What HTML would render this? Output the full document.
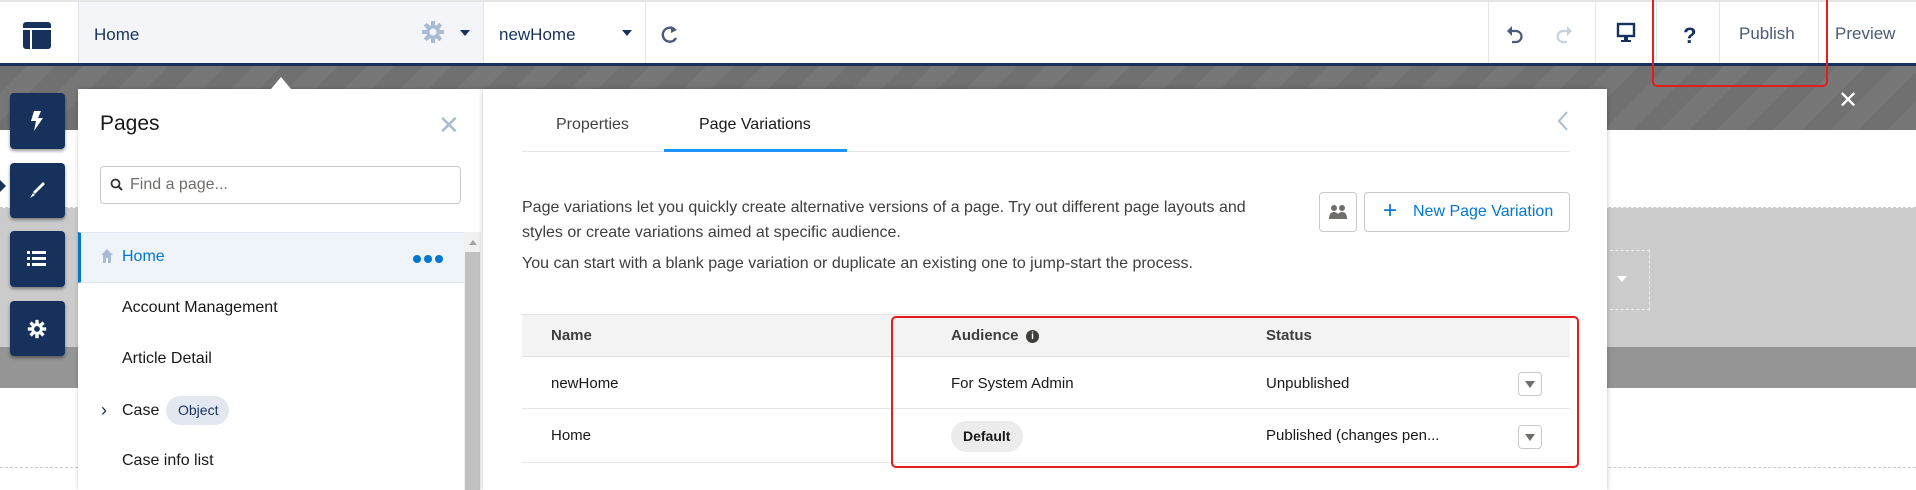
<!DOCTYPE html>
<html><head><meta charset="utf-8"><style>
*{box-sizing:border-box;margin:0;padding:0}
body{width:1916px;height:490px;overflow:hidden;position:relative;font-family:"Liberation Sans",sans-serif;background:#fff;color:#181818}
.a{position:absolute}
.t{position:absolute;white-space:nowrap}
.btn{background:#16325c;border-radius:4px;box-shadow:0 2px 3px rgba(0,0,0,.4)}
.row{position:absolute;left:122px;font-size:16px;color:#181818}
</style></head><body>
<div class="a" style="left:0;top:65px;width:1916px;height:65px;background:repeating-linear-gradient(135deg,#707070 0 20px,#777 20px 40px)"></div>
<div class="a" style="left:0;top:130px;width:1916px;height:78px;background:#fff;border-bottom:1px dashed #ccc"></div>
<div class="a" style="left:0;top:208px;width:1916px;height:139px;background:#cbcbcb"></div>
<div class="a" style="left:1610px;top:250px;width:40px;height:60px;border:1px dashed #eee;border-left:none"></div>
<div class="a" style="left:1617px;top:276px;border:5px solid transparent;border-top:6px solid #fff"></div>
<div class="a" style="left:0;top:347px;width:1916px;height:41px;background:#959595"></div>
<div class="a" style="left:0;top:467px;width:1916px;border-top:1px dashed #ccc"></div>
<div class="t" style="left:1838px;top:86px;color:#fff;font-size:24px">✕</div>

<div class="a" style="left:0;top:0;width:1916px;height:66px;background:#fff;border-top:2px solid #e5e5e5;border-bottom:3px solid #16325c"></div>
<div class="a" style="left:23px;top:22px;width:28px;height:27px;background:#16325c;border-radius:3px"></div>
<div class="a" style="left:23px;top:28px;width:28px;height:2px;background:#fff"></div>
<div class="a" style="left:30px;top:30px;width:2px;height:19px;background:#fff"></div>
<div class="a" style="left:78px;top:2px;width:405px;height:61px;background:#f3f5f9;border-left:1px solid #e0e4ea"></div>
<div class="t" style="left:94px;top:25px;font-size:17px;color:#16325c">Home</div>
<svg class="a" style="left:421px;top:20px" width="24" height="24" viewBox="0 0 24 24"><g fill="#a9bcd4"><circle cx="12" cy="12" r="7"/><rect x="10" y="1" width="4" height="22"/><rect x="1" y="10" width="22" height="4"/><rect x="10" y="1" width="4" height="22" transform="rotate(45 12 12)"/><rect x="10" y="1" width="4" height="22" transform="rotate(-45 12 12)"/></g><circle cx="12" cy="12" r="3.5" fill="#f3f5f9"/></svg>
<div class="a" style="left:460px;top:30px;border:5px solid transparent;border-top:6px solid #16325c"></div>
<div class="a" style="left:483px;top:2px;width:1px;height:61px;background:#e5e5e5"></div>
<div class="t" style="left:499px;top:25px;font-size:17px;color:#16325c">newHome</div>
<div class="a" style="left:622px;top:30px;border:5px solid transparent;border-top:6px solid #16325c"></div>
<div class="a" style="left:645px;top:2px;width:1px;height:61px;background:#e5e5e5"></div>
<svg class="a" style="left:660px;top:24px" width="20" height="22" viewBox="0 0 20 22"><path d="M15 6 A7 7 0 1 0 16 14" fill="none" stroke="#4a5a78" stroke-width="2.4"/><path d="M11 2 L17 6 L11 9 Z" fill="#4a5a78"/></svg>
<div class="a" style="left:1488px;top:2px;width:1px;height:61px;background:#e5e5e5"></div>
<svg class="a" style="left:1505px;top:24px" width="20" height="22" viewBox="0 0 20 22"><path d="M5 7 H11 A5 5 0 0 1 11 18 H7" fill="none" stroke="#4a5a78" stroke-width="2.2"/><path d="M2 7 L7 2 L7 12 Z" fill="#4a5a78"/></svg>
<svg class="a" style="left:1554px;top:24px" width="20" height="22" viewBox="0 0 20 22"><path d="M15 7 H9 A5 5 0 0 0 9 18 H13" fill="none" stroke="#c9d0da" stroke-width="2.2"/><path d="M18 7 L13 2 L13 12 Z" fill="#c9d0da"/></svg>
<div class="a" style="left:1595px;top:2px;width:1px;height:61px;background:#e5e5e5"></div>
<svg class="a" style="left:1616px;top:22px" width="20" height="22" viewBox="0 0 20 22"><rect x="2" y="2" width="16" height="12" fill="none" stroke="#16325c" stroke-width="2.4"/><rect x="8" y="14" width="4" height="4" fill="#16325c"/><rect x="5" y="18" width="10" height="2" fill="#16325c"/></svg>
<div class="a" style="left:1656px;top:2px;width:1px;height:61px;background:#e5e5e5"></div>
<div class="t" style="left:1683px;top:23px;font-size:22px;font-weight:bold;color:#16325c">?</div>
<div class="a" style="left:1719px;top:2px;width:1px;height:61px;background:#e5e5e5"></div>
<div class="t" style="left:1739px;top:24px;font-size:17px;color:#4a5a78">Publish</div>
<div class="a" style="left:1818px;top:2px;width:1px;height:61px;background:#e5e5e5"></div>
<div class="t" style="left:1835px;top:24px;font-size:17px;color:#4a5a78">Preview</div>
<div class="a" style="left:1652px;top:0;width:176px;height:87px;border:2px solid #e31d1d;border-top:none;border-radius:0 0 5px 5px"></div>

<div class="a btn" style="left:10px;top:93px;width:55px;height:56px"></div>
<svg class="a" style="left:29px;top:110px" width="16" height="22" viewBox="0 0 16 22"><path d="M5 1 H12 L9 8 H14 L5 21 L7 11 H2 Z" fill="#fff"/></svg>
<div class="a btn" style="left:10px;top:163px;width:55px;height:55px"></div>
<svg class="a" style="left:27px;top:180px" width="20" height="20" viewBox="0 0 20 20"><path d="M16 2 L18 4 L8 14 L6 12 Z" fill="#fff"/><path d="M6 13 L8 15 L3 18 Z" fill="#fff"/></svg>
<div class="a" style="left:0;top:180px;border:6px solid transparent;border-left:6px solid #16325c"></div>
<div class="a btn" style="left:10px;top:231px;width:55px;height:56px"></div>
<svg class="a" style="left:27px;top:250px" width="20" height="18" viewBox="0 0 20 18"><g fill="#fff"><rect x="0" y="1" width="3" height="3"/><rect x="5" y="1" width="14" height="3"/><rect x="0" y="7" width="3" height="3"/><rect x="5" y="7" width="14" height="3"/><rect x="0" y="13" width="3" height="3"/><rect x="5" y="13" width="14" height="3"/></g></svg>
<div class="a btn" style="left:10px;top:301px;width:55px;height:55px"></div>
<svg class="a" style="left:27px;top:319px" width="20" height="20" viewBox="0 0 24 24"><g fill="#fff"><circle cx="12" cy="12" r="7"/><rect x="10" y="1" width="4" height="22"/><rect x="1" y="10" width="22" height="4"/><rect x="10" y="1" width="4" height="22" transform="rotate(45 12 12)"/><rect x="10" y="1" width="4" height="22" transform="rotate(-45 12 12)"/></g><circle cx="12" cy="12" r="3.5" fill="#16325c"/></svg>

<div class="a" style="left:78px;top:89px;width:405px;height:401px;background:#fff;box-shadow:0 0 4px rgba(0,0,0,.2)"></div>
<div class="a" style="left:271px;top:77px;border:10px solid transparent;border-bottom:12px solid #fff;border-top:none"></div>
<div class="t" style="left:100px;top:112px;font-size:21px;color:#181818">Pages</div>
<div class="t" style="left:438px;top:110px;font-size:26px;color:#a9bcd4">✕</div>
<div class="a" style="left:100px;top:166px;width:361px;height:38px;border:1px solid #c9c9c9;border-radius:4px"></div>
<svg class="a" style="left:110px;top:178px" width="14" height="14" viewBox="0 0 14 14"><circle cx="5.5" cy="5.5" r="4" fill="none" stroke="#333" stroke-width="1.8"/><path d="M8.5 8.5 L12 12" stroke="#333" stroke-width="2"/></svg>
<div class="t" style="left:130px;top:176px;font-size:16px;color:#706e6b">Find a page...</div>
<div class="a" style="left:78px;top:232px;width:386px;height:51px;background:#eef4fa;border-left:3px solid #0176d3;border-top:1px solid #dde6f0;border-bottom:1px solid #dde6f0"></div>
<svg class="a" style="left:100px;top:248px" width="14" height="16" viewBox="0 0 14 16"><path d="M7 1 L13 7 H11 V15 H8 V10 H6 V15 H3 V7 H1 Z" fill="#a9bcd4"/></svg>
<div class="t" style="left:122px;top:248px;font-size:16px;color:#0176d3">Home</div>
<div class="a" style="left:413px;top:255px;width:8px;height:8px;border-radius:50%;background:#0176d3;box-shadow:11px 0 #0176d3,22px 0 #0176d3"></div>
<div class="row" style="top:299px">Account Management</div>
<div class="row" style="top:350px">Article Detail</div>
<div class="t" style="left:101px;top:400px;font-size:18px;color:#16325c">›</div>
<div class="row" style="top:402px">Case</div>
<div class="a" style="left:166px;top:396px;width:63px;height:29px;border-radius:15px;background:#e3e8f0"></div>
<div class="t" style="left:178px;top:402px;font-size:14px;color:#16325c">Object</div>
<div class="row" style="top:452px">Case info list</div>
<div class="a" style="left:464px;top:232px;width:17px;height:258px;background:#f1f1f1"></div>
<div class="a" style="left:469px;top:240px;border:4px solid transparent;border-bottom:5px solid #a3a3a3;border-top:none"></div>
<div class="a" style="left:465px;top:252px;width:15px;height:238px;background:#c1c1c1"></div>

<div class="a" style="left:483px;top:89px;width:1124px;height:401px;background:#fff;box-shadow:0 0 5px rgba(0,0,0,.25)"></div>
<div class="t" style="left:556px;top:116px;font-size:16px;color:#444">Properties</div>
<div class="t" style="left:699px;top:116px;font-size:16px;color:#181818">Page Variations</div>
<div class="a" style="left:522px;top:151px;width:1048px;height:1px;background:#e5e5e5"></div>
<div class="a" style="left:664px;top:149px;width:183px;height:3px;background:#1b96ff"></div>
<svg class="a" style="left:1556px;top:110px" width="14" height="22" viewBox="0 0 14 22"><path d="M11 2 L3 11 L11 20" fill="none" stroke="#a9bcd4" stroke-width="2"/></svg>
<div class="t" style="left:522px;top:195px;font-size:16px;color:#3e3e3c;line-height:25px">Page variations let you quickly create alternative versions of a page. Try out different page layouts and<br>styles or create variations aimed at specific audience.</div>
<div class="t" style="left:522px;top:255px;font-size:16px;color:#3e3e3c">You can start with a blank page variation or duplicate an existing one to jump-start the process.</div>
<div class="a" style="left:1319px;top:192px;width:38px;height:40px;border:1px solid #c9c9c9;border-radius:4px"></div>
<svg class="a" style="left:1328px;top:203px" width="20" height="18" viewBox="0 0 20 18"><g fill="#706e6b"><circle cx="6" cy="5" r="3"/><circle cx="14" cy="5" r="3"/><path d="M1 16 Q1 9 6 9 Q11 9 11 16 Z"/><path d="M9 16 Q9 9 14 9 Q19 9 19 16 Z"/></g></svg>
<div class="a" style="left:1364px;top:192px;width:206px;height:40px;border:1px solid #c9c9c9;border-radius:4px"></div>
<div class="t" style="left:1383px;top:199px;font-size:24px;color:#0176d3;line-height:24px">+</div>
<div class="t" style="left:1413px;top:203px;font-size:16px;color:#0176d3">New Page Variation</div>
<div class="a" style="left:522px;top:314px;width:1048px;height:43px;background:#f3f3f3;border-top:1px solid #e5e5e5;border-bottom:1px solid #e0e0e0"></div>
<div class="t" style="left:551px;top:327px;font-size:15px;color:#3e3e3c;font-weight:bold">Name</div>
<div class="t" style="left:951px;top:327px;font-size:15px;color:#3e3e3c;font-weight:bold">Audience</div>
<div class="a" style="left:1026px;top:330px;width:13px;height:13px;border-radius:50%;background:#3e3e3c;color:#fff;font-size:10px;text-align:center;line-height:13px;font-weight:bold">i</div>
<div class="t" style="left:1266px;top:327px;font-size:15px;color:#3e3e3c;font-weight:bold">Status</div>
<div class="t" style="left:551px;top:375px;font-size:15px;color:#181818">newHome</div>
<div class="t" style="left:951px;top:375px;font-size:15px;color:#181818">For System Admin</div>
<div class="t" style="left:1266px;top:375px;font-size:15px;color:#181818">Unpublished</div>
<div class="a" style="left:522px;top:408px;width:1048px;height:1px;background:#e5e5e5"></div>
<div class="t" style="left:551px;top:427px;font-size:15px;color:#181818">Home</div>
<div class="a" style="left:951px;top:421px;width:72px;height:31px;border-radius:16px;background:#ececec"></div>
<div class="t" style="left:963px;top:428px;font-size:14px;font-weight:bold;color:#181818">Default</div>
<div class="t" style="left:1266px;top:427px;font-size:15px;color:#181818">Published (changes pen...</div>
<div class="a" style="left:522px;top:462px;width:1048px;height:1px;background:#e5e5e5"></div>
<div class="a" style="left:1518px;top:372px;width:24px;height:24px;border:1px solid #c9c9c9;border-radius:4px"></div>
<div class="a" style="left:1525px;top:381px;border:5px solid transparent;border-top:7px solid #706e6b"></div>
<div class="a" style="left:1518px;top:425px;width:24px;height:24px;border:1px solid #c9c9c9;border-radius:4px"></div>
<div class="a" style="left:1525px;top:434px;border:5px solid transparent;border-top:7px solid #706e6b"></div>
<div class="a" style="left:891px;top:316px;width:688px;height:152px;border:2px solid #e31d1d;border-radius:5px"></div>
</body></html>
